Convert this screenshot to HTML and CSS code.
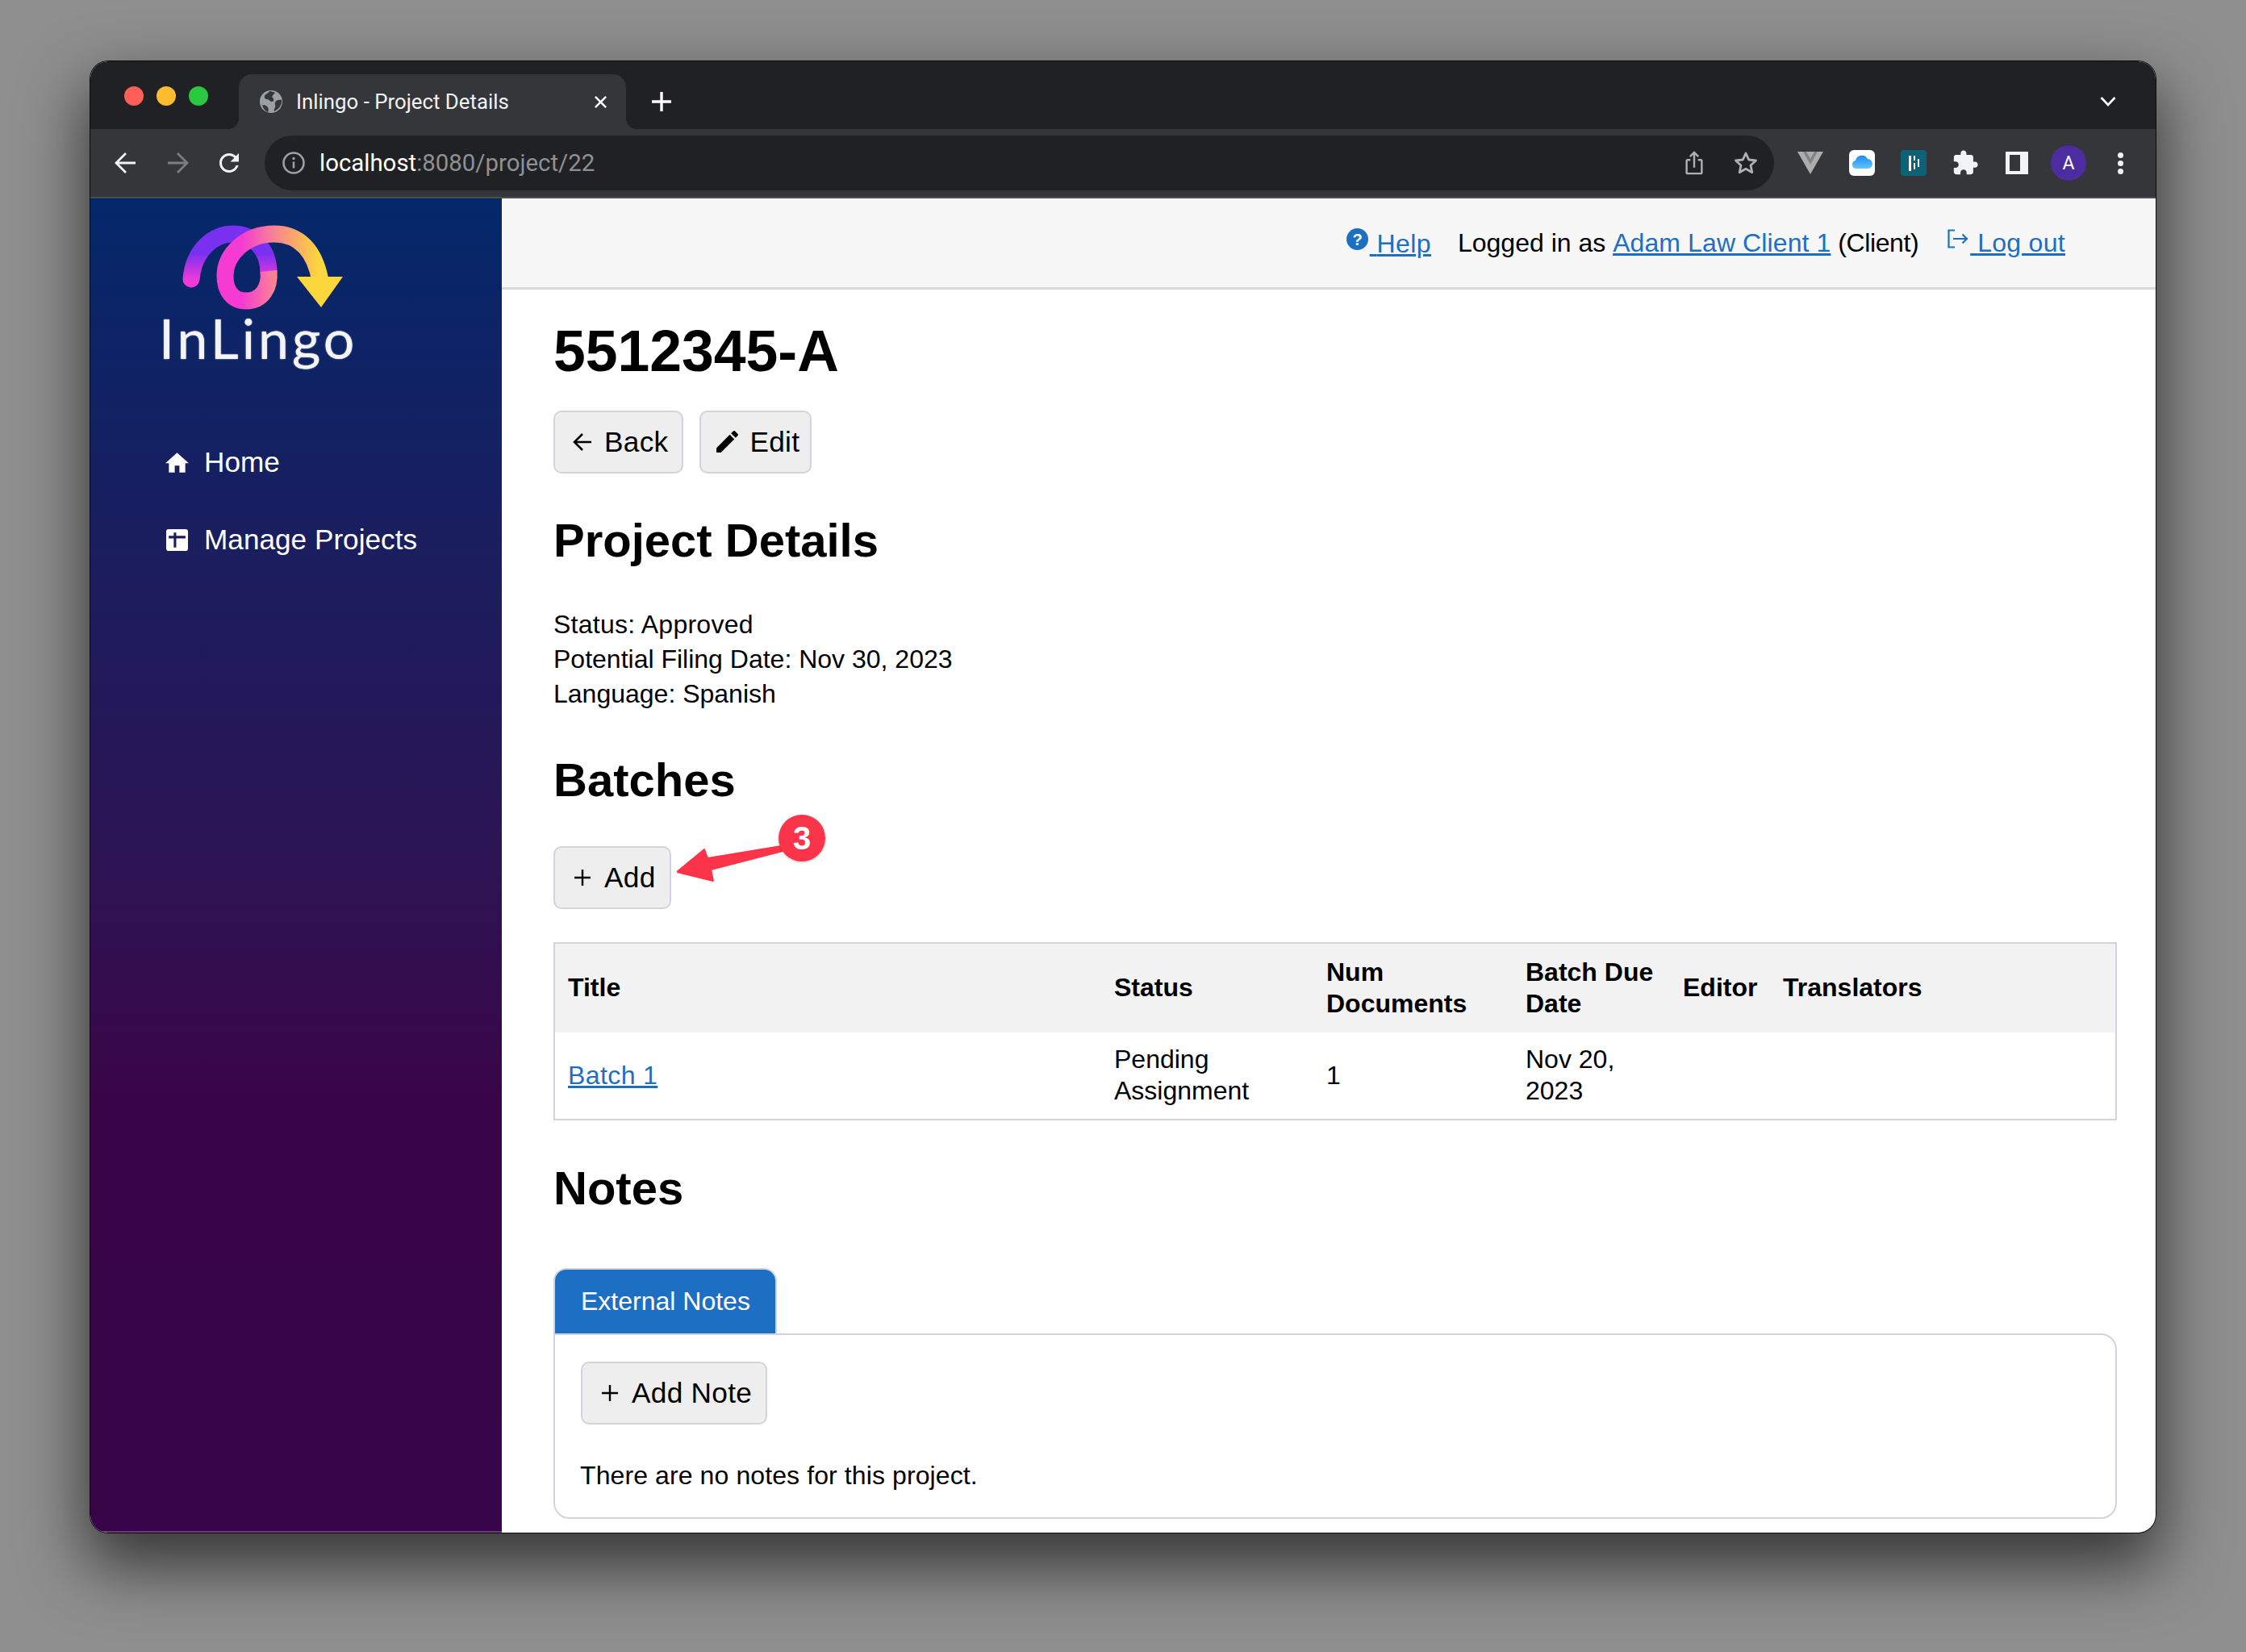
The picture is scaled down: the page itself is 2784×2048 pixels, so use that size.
FILE: index.html
```html
<!DOCTYPE html>
<html lang="en">
<head>
<meta charset="utf-8">
<title>Inlingo - Project Details</title>
<link rel="stylesheet" href="styles.css">
</head>
<body>
<div class="window">
  <div class="tabstrip">
    <div class="lights"><span class="light red"></span><span class="light amber"></span><span class="light green"></span></div>
    <div class="tab">
      <svg class="favicon" viewBox="0 0 28 28"><circle cx="14" cy="14" r="14" fill="#9aa0a6"/><path d="M12 1c-1 3-5 3-6 6-1 2 1 4 3 4 3 0 3 3 6 3 3 0 3-3 1-5-2-1 1-4 3-6-2-1-5-2-7-2zM27 12c-3-1-7 0-8 3-1 2 1 4 0 6-1 2-2 4-1 5 5-2 10-8 9-14zM3 18c3 0 6 1 7 3 1 2 1 4 0 6-3-1-6-5-7-9z" fill="#35363a"/></svg>
      <span class="tab-title">Inlingo - Project Details</span>
      <svg class="tab-close" viewBox="0 0 18 18"><path d="M2 2l14 14M16 2L2 16" stroke="#fff" stroke-width="2.6" fill="none"/></svg>
    </div>
    <svg class="newtab" viewBox="0 0 24 24"><path d="M12 0v24M0 12h24" stroke="#fff" stroke-width="3.4"/></svg>
    <svg class="chevron" viewBox="0 0 20 14"><path d="M1.5 2L10 11l8.500-9" stroke="#fff" stroke-width="2.6" fill="none"/></svg>
  </div>
  <div class="toolbar">
    <span class="slot"><svg class="navicon" viewBox="0 0 28 28"><path d="M26 14H3M14 2L2 14l12 12" stroke="#f1f3f4" stroke-width="2.8" fill="none"/></svg></span>
    <span class="slot"><svg class="navicon" viewBox="0 0 28 28"><path d="M2 14h23M14 2l12 12-12 12" stroke="#7c7d80" stroke-width="2.8" fill="none"/></svg></span>
    <span class="slot"><svg class="reload" viewBox="0 0 24 24"><path fill="#f1f3f4" d="M17.650 6.350C16.200 4.900 14.210 4 12 4c-4.420 0-7.990 3.580-7.990 8s3.570 8 7.990 8c3.730 0 6.840-2.550 7.730-6h-2.080c-.82 2.330-3.040 4-5.650 4-3.310 0-6-2.690-6-6s2.690-6 6-6c1.660 0 3.140.69 4.220 1.780L13 11h7V4l-2.350 2.350z"/></svg></span>
    <div class="omnibox">
      <svg class="info" viewBox="0 0 28 28"><circle cx="14" cy="14" r="12.500" fill="none" stroke="#9aa0a6" stroke-width="2.6"/><path d="M14 12.500v8" stroke="#9aa0a6" stroke-width="2.600"/><circle cx="14" cy="8.500" r="1.700" fill="#9aa0a6"/></svg>
      <span class="url"><span class="url-host">localhost</span>:8080/project/22</span>
      <span class="slot slot-share"><svg class="share" viewBox="0 0 24 32"><path d="M7 12H3.500a1.500 1.500 0 0 0-1.500 1.500V28.500A1.500 1.500 0 0 0 3.500 30h17a1.500 1.500 0 0 0 1.500-1.500V13.500a1.500 1.500 0 0 0-1.500-1.500H17M12 22V2M6.500 7.500L12 2l5.500 5.500" fill="none" stroke="#aeb0b3" stroke-width="2.600"/></svg></span>
      <span class="slot"><svg class="star" viewBox="0 0 30 30"><path d="M15 3l3.700 8 8.800 1-6.500 6 1.800 8.700L15 22.300 7.200 26.700 9 18l-6.500-6 8.800-1z" fill="none" stroke="#aeb0b3" stroke-width="2.800" stroke-linejoin="round"/></svg></span>
    </div>
    <span class="slot"><svg class="vue" viewBox="0 0 32 28"><path d="M0 0h32L16 28z" fill="#adadad"/><path d="M7 0h4l5 9 5-9h4L16 16z" fill="#838384"/></svg></span>
    <span class="slot"><svg class="ext" viewBox="0 0 32 32"><defs><linearGradient id="cloud" x1="0" y1="0" x2="0" y2="1"><stop offset="0" stop-color="#1b8cf2"/><stop offset="1" stop-color="#63c4fa"/></linearGradient></defs><rect width="32" height="32" rx="6" fill="#fff"/><path d="M9 23a5 5 0 0 1-1-9.900 8 8 0 0 1 15-2A6 6 0 0 1 24 23z" fill="url(#cloud)"/></svg></span>
    <span class="slot"><svg class="ext" viewBox="0 0 32 32"><rect width="32" height="32" rx="4" fill="#0e6276"/><path d="M10 7h3v19h-3zM16 7h2v6h-2zM16 16h2v8h-2zM21 11h2v10h-2z" fill="#fff"/></svg></span>
    <span class="slot"><svg class="puzzle" viewBox="0 0 24 24"><path fill="#f1f3f4" d="M20.500 11H19V7c0-1.100-.9-2-2-2h-4V3.500C13 2.120 11.880 1 10.500 1S8 2.120 8 3.500V5H4c-1.100 0-1.990.9-1.990 2v3.800H3.500c1.490 0 2.700 1.210 2.700 2.700s-1.210 2.700-2.700 2.700H2V20c0 1.100.9 2 2 2h3.800v-1.500c0-1.490 1.210-2.700 2.700-2.700 1.490 0 2.700 1.210 2.700 2.700V22H17c1.100 0 2-.9 2-2v-4h1.500c1.380 0 2.500-1.120 2.500-2.500S21.880 11 20.500 11z"/></svg></span>
    <span class="slot"><span class="panel-icon"></span></span>
    <span class="slot"><span class="avatar">A</span></span>
    <span class="slot"><span class="kebab"><i></i><i></i><i></i></span></span>
  </div>
  <div class="page">
    <aside class="sidebar">
      <div class="logo">
        <svg class="logo-mark" viewBox="0 0 240 115">
          <defs>
            <linearGradient id="arcA" gradientUnits="userSpaceOnUse" x1="0" y1="44" x2="0" y2="76"><stop offset="0" stop-color="#7a30f0"/><stop offset="1" stop-color="#ee3ad8"/></linearGradient>
            <linearGradient id="arcB" gradientUnits="userSpaceOnUse" x1="100" y1="0" x2="195" y2="0"><stop offset="0" stop-color="#f53bd2"/><stop offset=".35" stop-color="#f8789f"/><stop offset=".65" stop-color="#fba36f"/><stop offset="1" stop-color="#fbd63c"/></linearGradient>
          </defs>
          <path d="M37 76C40 40 65 20 88 20c27 0 45 20 45 48" fill="none" stroke="url(#arcA)" stroke-width="21" stroke-linecap="round"/>
          <path d="M133 66c2 20-8 37-28 37-17 0-26-13-26-31 0-27 26-52 61-52 30 0 50 20 57 58" fill="none" stroke="url(#arcB)" stroke-width="21"/>
          <path d="M168 73h57l-27 38z" fill="#fbd63c"/>
        </svg>
        <div class="logo-text">InLingo</div>
      </div>
      <nav class="nav">
        <a class="nav-item"><svg class="nav-home" viewBox="2 3 20 17"><path fill="#fff" d="M10 20v-6h4v6h5v-8h3L12 3 2 12h3v8z"/></svg><span>Home</span></a>
        <a class="nav-item"><svg class="nav-grid" viewBox="0 0 26 26"><path fill="#fff" fill-rule="evenodd" d="M3 0h20a3 3 0 0 1 3 3v20a3 3 0 0 1-3 3H3a3 3 0 0 1-3-3V3a3 3 0 0 1 3-3zM3 8v3h6v11h3V11h11V8H12V4H9v4z"/></svg><span>Manage Projects</span></a>
      </nav>
    </aside>
    <main class="main">
      <header class="topbar">
        <a class="link link-help"><svg class="help-icon" viewBox="0 0 27 27"><circle cx="13.500" cy="13.500" r="13.500" fill="#1d6fc4"/><text x="13.500" y="20.500" class="help-q">?</text></svg> <span>Help</span></a>
        <span class="who">Logged in as <a class="link link-user">Adam Law Client 1</a> <span class="role">(Client)</span></span>
        <a class="link link-logout"><svg class="logout-icon" viewBox="0 0 26 24"><path d="M9 1.500H1.500v21H9M7 12h17M18.500 6.500L24 12l-5.500 5.500" fill="none" stroke="#1d6fc4" stroke-width="2.200"/></svg> <span>Log out</span></a>
      </header>
      <div class="content">
        <h1 class="title">5512345-A</h1>
        <div class="actions">
          <a class="btn"><svg class="btn-icon" viewBox="0 0 24 24"><path d="M23 12H2M12 2L2 12l10 10" fill="none" stroke="#000" stroke-width="2.600"/></svg>Back</a>
          <a class="btn btn-edit"><svg class="btn-pencil" viewBox="3 3 18 18"><path d="M3 17.250V21h3.750L17.810 9.940l-3.750-3.750L3 17.250zM20.710 7.040c.39-.39.39-1.020 0-1.410l-2.340-2.340c-.39-.39-1.020-.39-1.410 0l-1.830 1.830 3.750 3.750 1.830-1.830z"/></svg>Edit</a>
        </div>
        <h2 class="section details-head">Project Details</h2>
        <div class="details">
          <div class="status-line">Status: Approved</div>
          <div>Potential Filing Date: Nov 30, 2023</div>
          <div>Language: Spanish</div>
        </div>
        <h2 class="section batches-head">Batches</h2>
        <div class="add-row">
          <a class="btn"><svg class="btn-icon" viewBox="0 0 24 24"><path d="M12 2v20M2 12h20" fill="none" stroke="#000" stroke-width="2.400"/></svg>Add</a>
        </div>
        <table class="batches">
          <colgroup><col class="c1"><col class="c2"><col class="c3"><col class="c4"><col class="c5"><col></colgroup>
          <thead>
            <tr><th>Title</th><th>Status</th><th>Num Documents</th><th>Batch Due Date</th><th>Editor</th><th>Translators</th></tr>
          </thead>
          <tbody>
            <tr><td><a class="link link-batch">Batch 1</a></td><td>Pending Assignment</td><td>1</td><td>Nov 20, 2023</td><td></td><td></td></tr>
          </tbody>
        </table>
        <h2 class="section notes-head">Notes</h2>
        <div class="tabs"><span class="notes-tab">External Notes</span></div>
        <div class="notes-panel">
          <a class="btn"><svg class="btn-icon" viewBox="0 0 24 24"><path d="M12 2v20M2 12h20" fill="none" stroke="#000" stroke-width="2.400"/></svg>Add Note</a>
          <p class="empty">There are no notes for this project.</p>
        </div>
      </div>
    </main>
  </div>
  <div class="callout">
    <svg class="callout-arrow" viewBox="0 0 190 90"><path d="M0 71L34 43 38 54 129 39 131 45 42 68 45 82z" fill="#fb3449" stroke="#fb3449" stroke-width="2" stroke-linejoin="round"/></svg>
    <span class="callout-badge">3</span>
  </div>
</div>
</body>
</html>
```
FILE: styles.css
```css
* { box-sizing: border-box; }
html, body { margin: 0; height: 100%; }
body {
  background: #8f8f8f;
  padding: 76px 0 0 112px;
  font-family: "Liberation Sans", Arial, sans-serif;
  font-size: 32px;
  color: #000;
  overflow: hidden;
}
.window {
  position: relative;
  width: 2560px;
  height: 1824px;
  border-radius: 22px;
  overflow: hidden;
  display: flex;
  flex-direction: column;
  background: #fff;
  box-shadow: 0 0 0 1px #0c0c0c, 0 36px 80px 6px rgba(0,0,0,.62);
}

/* Browser chrome */
.tabstrip {
  height: 84px;
  flex: none;
  background: #202124;
  display: flex;
  align-items: flex-end;
  padding: 0 49px 0 42px;
}
.lights { display: flex; gap: 16px; align-self: flex-start; margin-top: 31px; margin-right: 38px; }
.light { width: 24px; height: 24px; border-radius: 50%; }
.red { background: #ff5f57; }
.amber { background: #febc2e; }
.green { background: #28c840; }
.tab {
  position: relative;
  width: 480px;
  height: 68px;
  background: #35363a;
  border-radius: 16px 16px 0 0;
  display: flex;
  align-items: center;
  padding: 0 23px 0 26px;
}
.tab::before, .tab::after {
  content: "";
  position: absolute;
  bottom: 0;
  width: 14px;
  height: 14px;
}
.tab::before { left: -14px; background: radial-gradient(circle at 0 0, #202124 14px, #35363a 14.500px); }
.tab::after { right: -14px; background: radial-gradient(circle at 100% 0, #202124 14px, #35363a 14.500px); }
.favicon { width: 28px; height: 28px; flex: none; }
.tab-title { font-family: Roboto, sans-serif; font-size: 25.800px; color: #f1f3f4; margin-left: 17px; white-space: nowrap; }
.tab-close { width: 17px; height: 17px; margin-left: auto; }
.newtab { width: 24px; height: 24px; margin: 0 0 22px 32px; }
.chevron { width: 20px; height: 14px; margin: 0 0 27px auto; }

.toolbar {
  height: 86px;
  flex: none;
  background: #35363a;
  border-bottom: 2px solid #4d4e52;
  display: flex;
  align-items: center;
  padding: 0 12px;
}
.slot { width: 64px; height: 64px; flex: none; display: flex; align-items: center; justify-content: center; }
.navicon { width: 28px; height: 28px; }
.reload { width: 36px; height: 36px; }
.omnibox {
  flex: 1;
  height: 68px;
  margin: 0 13px 0 12px;
  background: #202124;
  border-radius: 34px;
  display: flex;
  align-items: center;
  padding: 0 3px 0 22px;
}
.info { width: 28px; height: 28px; flex: none; }
.url { font-family: Roboto, sans-serif; font-size: 29.400px; color: #8f9093; margin-left: 18px; }
.url-host { color: #fff; }
.slot-share { margin-left: auto; }
.share { width: 24px; height: 30px; }
.star { width: 30px; height: 30px; }
.vue { width: 32px; height: 28px; }
.ext { width: 32px; height: 32px; }
.puzzle { width: 34px; height: 34px; }
.panel-icon { width: 28px; height: 28px; background: #f1f3f4; display: flex; padding: 4px 10px 4px 5px; }
.panel-icon::before { content: ""; flex: 1; background: #35363a; }
.avatar {
  width: 44px; height: 44px; border-radius: 50%;
  background: #4d2ba0; color: #fff;
  font-family: Roboto, sans-serif; font-size: 23px;
  display: flex; align-items: center; justify-content: center;
}
.kebab { display: flex; flex-direction: column; gap: 3px; }
.kebab i { width: 7px; height: 7px; border-radius: 50%; background: #f1f3f4; }

/* Page */
.page { flex: 1; min-height: 0; display: flex; }
.sidebar {
  width: 510px;
  flex: none;
  background: linear-gradient(180deg, #04286a 0%, #1c1d5e 28%, #2b1555 48%, #3a0548 68%, #38054a 100%);
  border-bottom: 2px solid #6c3a78;
}
.logo { padding: 24px 0 0 88px; height: 300px; }
.logo-mark { display: block; width: 240px; height: 115px; }
.logo-text {
  margin: 1px 0 0 -3px;
  font-family: Lato, sans-serif;
  font-size: 68px;
  line-height: 66px;
  letter-spacing: 4px;
  color: #f4f4f6;
  text-shadow: 0 0 1.500px #f4f4f6;
}
.nav { display: flex; flex-direction: column; gap: 42px; padding-left: 93px; }
.nav-item {
  display: flex;
  align-items: center;
  height: 54px;
  color: #fff;
  font-size: 35.200px;
}
.nav-item span { margin-left: 19px; }
.nav-home { width: 29px; height: 25px; margin-bottom: -1px; }
.nav-grid { width: 27px; height: 27px; margin-left: 1px; margin-right: 1px; }

.main { flex: 1; min-width: 0; display: flex; flex-direction: column; }
.topbar {
  height: 113px;
  flex: none;
  background: #f7f7f7;
  border-bottom: 3px solid #d8d8d8;
  display: flex;
  justify-content: flex-end;
  align-items: center;
  padding: 1px 112px 0 0;
  white-space: pre;
}
.link { color: #1d6fc4; text-decoration: underline; }
.link-help { margin-right: 33px; }
.link-help span { letter-spacing: .4px; }
.link-user { letter-spacing: .1px; }
.link-logout span { letter-spacing: .3px; }
.link-batch { letter-spacing: .4px; }
.role { letter-spacing: -.4px; }
.who { margin-right: 36px; }
.help-icon { display: inline-block; width: 27px; height: 27px; vertical-align: 3px; margin-left: -2px; margin-right: 2px; }
.help-q { font-family: "Liberation Sans", sans-serif; font-weight: 700; font-size: 20px; fill: #fff; text-anchor: middle; }
.logout-icon { display: inline-block; width: 26px; height: 24px; vertical-align: 4px; margin-right: 2px; }

.content { padding: 33px 48px 0 64px; }
.title { margin: 0 0 30.500px; font-size: 71.500px; line-height: 86px; font-weight: 700; }
.actions { display: flex; gap: 20px; }
.btn {
  display: inline-flex;
  align-items: center;
  height: 78px;
  padding: 0 17px 0 22px;
  background: #eee;
  border: 2px solid #d1d5db;
  border-radius: 10px;
  font-size: 35.200px;
  letter-spacing: .3px;
  color: #000;
}
.btn-edit { padding-right: 13px; }
.btn-icon { width: 24px; height: 24px; margin-right: 15px; flex: none; }
.btn-pencil { width: 27px; height: 27px; margin: 0 14px 0 -3px; flex: none; }
.section { margin: 0; font-size: 58px; line-height: 69px; font-weight: 700; }
.details-head { margin-top: 48.500px; }
.details { margin-top: 48.500px; line-height: 43px; }
.status-line { letter-spacing: .25px; }
.batches-head { margin-top: 50px; }
.add-row { margin-top: 48px; }
.batches {
  width: 100%;
  margin-top: 41px;
  table-layout: fixed;
  border-collapse: separate;
  border-spacing: 0;
  border: 2px solid #d1d5db;
  line-height: 39px;
}
.c1 { width: 677px; }
.c2 { width: 263px; }
.c3 { width: 247px; }
.c4 { width: 195px; }
.c5 { width: 124px; }
.batches th { background: #f2f2f2; height: 110px; padding: 0 16px; text-align: left; font-weight: 700; }
.batches td { height: 107px; padding: 0 16px; }
.notes-head { margin-top: 49.500px; }
.tabs { margin-top: 64.500px; display: flex; }
.notes-tab {
  width: 277px;
  height: 81px;
  background: #1d6fc4;
  border: 2px solid #d1d5db;
  border-bottom: 0;
  border-radius: 16px 16px 0 0;
  color: #fff;
  display: flex;
  align-items: center;
  padding-left: 32px;
}
.notes-panel {
  height: 230px;
  border: 2px solid #d1d5db;
  border-radius: 0 20px 20px 20px;
  padding: 33px 0 0 32px;
}
.empty { margin: 43px 0 0 -1px; line-height: 40px; letter-spacing: .1px; }

/* Annotation */
.callout { position: absolute; left: 727px; top: 934px; width: 190px; height: 90px; }
.callout-arrow { position: absolute; left: 0; top: 0; width: 190px; height: 90px; }
.callout-badge {
  position: absolute;
  left: 126px;
  top: 0;
  width: 58px;
  height: 58px;
  border-radius: 50%;
  background: #fb3449;
  color: #fff;
  font-weight: 700;
  font-size: 40px;
  display: flex;
  align-items: center;
  justify-content: center;
  box-shadow: 0 1px 3px rgba(0,0,0,.25);
}
```
